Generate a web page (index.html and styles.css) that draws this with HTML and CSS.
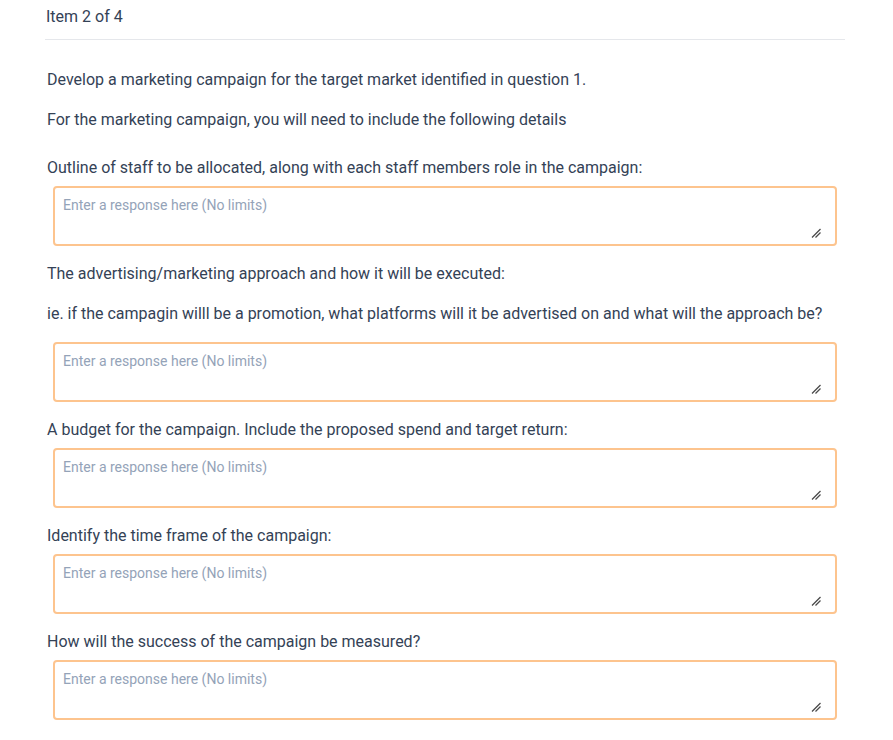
FILE: index.html
```html
<!DOCTYPE html>
<html>
<head>
<meta charset="utf-8">
<link rel="stylesheet" href="styles.css">
</head>
<body>
<div class="page">
  <div class="header">Item 2 of 4</div>
  <div class="content">
    <p class="intro">Develop a marketing campaign for the target market identified in question 1.</p>
    <p class="intro last">For the marketing campaign, you will need to include the following details</p>

    <p class="label">Outline of staff to be allocated, along with each staff members role in the campaign:</p>
    <div class="field">
      <textarea class="response" placeholder="Enter a response here (No limits)"></textarea>
      <svg class="grip" width="10" height="10" viewBox="0 0 10 10"><path d="M1 9.5 L9.5 1 M4.5 9.5 L9.5 4.5" stroke="#4b4b4b" stroke-width="1.3" fill="none"/></svg>
    </div>

    <p class="intro">The advertising/marketing approach and how it will be executed:</p>
    <p class="intro">ie. if the campagin willl be a promotion, what platforms will it be advertised on and what will the approach be?</p>
    <div class="field">
      <textarea class="response" placeholder="Enter a response here (No limits)"></textarea>
      <svg class="grip" width="10" height="10" viewBox="0 0 10 10"><path d="M1 9.5 L9.5 1 M4.5 9.5 L9.5 4.5" stroke="#4b4b4b" stroke-width="1.3" fill="none"/></svg>
    </div>

    <p class="label">A budget for the campaign. Include the proposed spend and target return:</p>
    <div class="field">
      <textarea class="response" placeholder="Enter a response here (No limits)"></textarea>
      <svg class="grip" width="10" height="10" viewBox="0 0 10 10"><path d="M1 9.5 L9.5 1 M4.5 9.5 L9.5 4.5" stroke="#4b4b4b" stroke-width="1.3" fill="none"/></svg>
    </div>

    <p class="label">Identify the time frame of the campaign:</p>
    <div class="field">
      <textarea class="response" placeholder="Enter a response here (No limits)"></textarea>
      <svg class="grip" width="10" height="10" viewBox="0 0 10 10"><path d="M1 9.5 L9.5 1 M4.5 9.5 L9.5 4.5" stroke="#4b4b4b" stroke-width="1.3" fill="none"/></svg>
    </div>

    <p class="label">How will the success of the campaign be measured?</p>
    <div class="field">
      <textarea class="response" placeholder="Enter a response here (No limits)"></textarea>
      <svg class="grip" width="10" height="10" viewBox="0 0 10 10"><path d="M1 9.5 L9.5 1 M4.5 9.5 L9.5 4.5" stroke="#4b4b4b" stroke-width="1.3" fill="none"/></svg>
    </div>
  </div>
</div>
</body>
</html>
```

FILE: styles.css
```css
html, body {
  margin: 0;
  padding: 0;
  background: #ffffff;
}
body {
  font-family: Roboto, "Liberation Sans", sans-serif;
  color: #344256;
  font-size: 16px;
  line-height: 22px;
}
.page {
  width: 800px;
  margin-left: 45px;
}
.header {
  padding: 6px 0 11px 1px;
  border-bottom: 1px solid #e5e7eb;
}
.content {
  padding: 28px 0 0 2px;
  display: flex;
  flex-direction: column;
  align-items: stretch;
}
p {
  margin: 0;
  padding-top: 1px;
}
.intro {
  margin-bottom: 17px;
}
.intro.last {
  margin-bottom: 25px;
}
.label {
  margin-bottom: 7px;
}
.field {
  position: relative;
  width: 784px;
  margin: 0 0 16px 6px;
}
.response {
  display: block;
  box-sizing: border-box;
  width: 784px;
  height: 60px;
  margin: 0;
  padding: 7px 8px 8px;
  border: 2px solid #fdc48e;
  border-radius: 4px;
  font-family: Roboto, "Liberation Sans", sans-serif;
  font-size: 14px;
  line-height: 20px;
  color: #334155;
  background: #fff;
  outline: none;
  resize: none;
}
.response::placeholder {
  color: #94a3b8;
}
.grip {
  position: absolute;
  right: 16px;
  bottom: 8px;
  pointer-events: none;
}
```
